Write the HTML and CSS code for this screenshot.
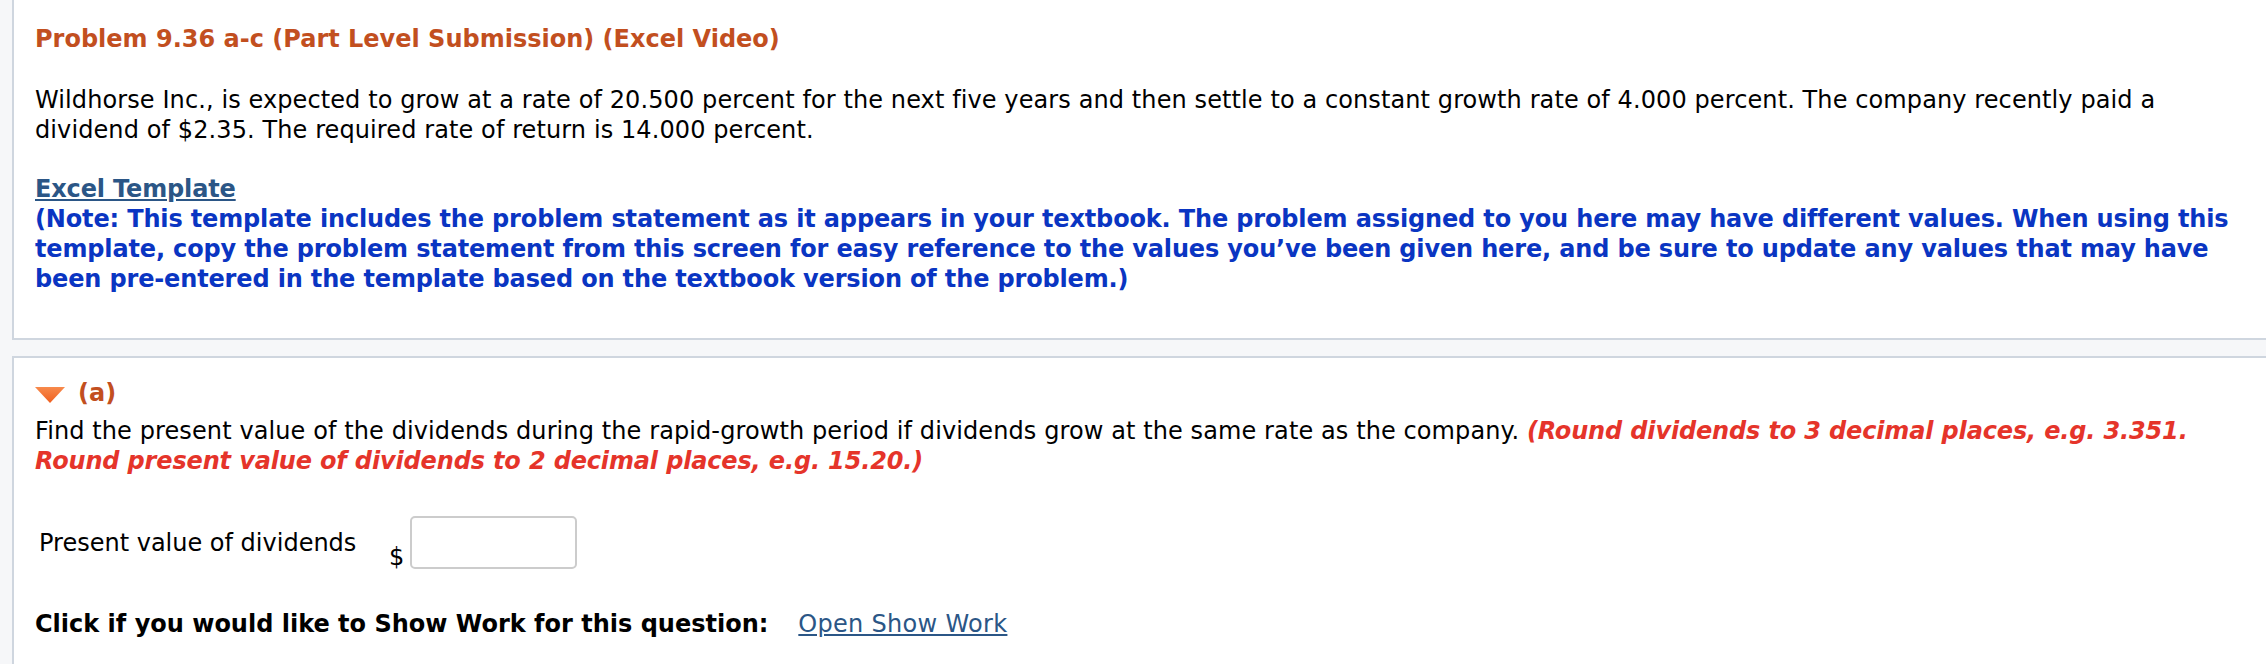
FILE: index.html
```html
<!DOCTYPE html>
<html lang="en">
<head>
<meta charset="utf-8">
<title>Problem 9.36 a-c</title>
<link rel="stylesheet" href="styles.css">
</head>
<body>
<div class="page">
  <section class="panel panel-problem">
    <h1 class="title">Problem 9.36 a-c (Part Level Submission) (Excel Video)</h1>
    <p class="statement">Wildhorse Inc., is expected to grow at a rate of 20.500 percent for the next five years and then settle to a constant growth rate of 4.000 percent. The company recently paid a dividend of $2.35. The required rate of return is 14.000 percent.</p>
    <div class="template">
      <a class="tpl-link" href="#">Excel Template</a>
      <p class="note">(Note: This template includes the problem statement as it appears in your textbook. The problem assigned to you here may have different values. When using this template, copy the problem statement from this screen for easy reference to the values you’ve been given here, and be sure to update any values that may have been pre-entered in the template based on the textbook version of the problem.)</p>
    </div>
  </section>

  <section class="panel panel-part">
    <div class="part-head">
      <svg class="tri" width="30" height="16" viewBox="0 0 30 16" aria-hidden="true">
        <defs>
          <linearGradient id="triGrad" x1="0" y1="0" x2="0" y2="1">
            <stop offset="0" stop-color="#f78a4c"/>
            <stop offset="1" stop-color="#ef5f1f"/>
          </linearGradient>
        </defs>
        <polygon points="0,0 30,0 15,16" fill="url(#triGrad)"/>
      </svg>
      <span class="part-label">(a)</span>
    </div>
    <p class="question">Find the present value of the dividends during the rapid-growth period if dividends grow at the same rate as the company. <em class="hint">(Round dividends to 3 decimal places, e.g. 3.351. Round present value of dividends to 2 decimal places, e.g. 15.20.)</em></p>
    <div class="answer-row">
      <span class="ans-label">Present value of dividends</span>
      <span class="ans-field">
        <span class="dollar">$</span>
        <input class="ans-input" type="text" aria-label="Present value of dividends">
      </span>
    </div>
    <div class="showwork">
      <span class="sw-text">Click if you would like to Show Work for this question:</span>
      <a class="sw-link" href="#">Open Show Work</a>
    </div>
  </section>
</div>
</body>
</html>
```

FILE: styles.css
```css
html, body {
  margin: 0;
  padding: 0;
}

body {
  background: #f6f7f9;
  font-family: "DejaVu Sans", Verdana, sans-serif;
  color: #000;
  overflow: hidden;
}

.page {
  display: flex;
  flex-direction: column;
  gap: 16px;
  padding-left: 12px;
}

.panel {
  background: #fff;
  border-left: 2px solid #cfd6df;
  border-bottom: 2px solid #cfd6df;
  padding: 0 10px 0 21px;
}

.panel-problem {
  padding-top: 24px;
  padding-bottom: 44px;
}

.panel-part {
  border-top: 2px solid #cfd6df;
  padding-top: 20px;
  padding-bottom: 40px;
}

.title {
  margin: 0;
  font-size: 24px;
  line-height: 30px;
  font-weight: bold;
  color: #c24f1f;
}

.statement {
  margin: 31px 0 0;
  font-size: 24px;
  line-height: 30px;
  letter-spacing: 0.1px;
}

.template {
  margin-top: 29px;
}

.tpl-link {
  display: block;
  font-size: 24px;
  line-height: 30px;
  font-weight: bold;
  letter-spacing: -0.15px;
  color: #2b5686;
  text-decoration: underline;
}

.note {
  margin: 0;
  font-size: 24px;
  line-height: 30px;
  font-weight: bold;
  letter-spacing: -0.15px;
  color: #0a35c2;
}

.part-head {
  display: flex;
  align-items: center;
  gap: 13px;
}

.tri {
  display: block;
  margin-top: 3px;
}

.part-label {
  font-size: 24px;
  line-height: 30px;
  font-weight: bold;
  color: #c24f1f;
}

.question {
  margin: 8px 0 0;
  font-size: 24px;
  line-height: 30px;
  letter-spacing: 0.1px;
}

.hint {
  font-weight: bold;
  font-style: italic;
  letter-spacing: -0.15px;
  color: #e5342a;
}

.answer-row {
  display: flex;
  align-items: center;
  margin-top: 40px;
  padding-left: 4px;
}

.ans-label {
  font-size: 24px;
  line-height: 30px;
  width: 350px;
}

.ans-field {
  display: flex;
  align-items: flex-end;
}

.dollar {
  font-size: 24px;
  line-height: 24px;
  margin-right: 6px;
}

.ans-input {
  box-sizing: border-box;
  width: 167px;
  height: 53px;
  margin: 0;
  border: 2px solid #cccccc;
  border-radius: 5px;
  background: #fff;
  outline: none;
}

.showwork {
  display: flex;
  align-items: baseline;
  gap: 30px;
  margin-top: 40px;
}

.sw-text {
  font-size: 24px;
  line-height: 30px;
  font-weight: bold;
}

.sw-link {
  font-size: 24px;
  line-height: 30px;
  letter-spacing: 0.3px;
  color: #2b5686;
  text-decoration: underline;
}
```
